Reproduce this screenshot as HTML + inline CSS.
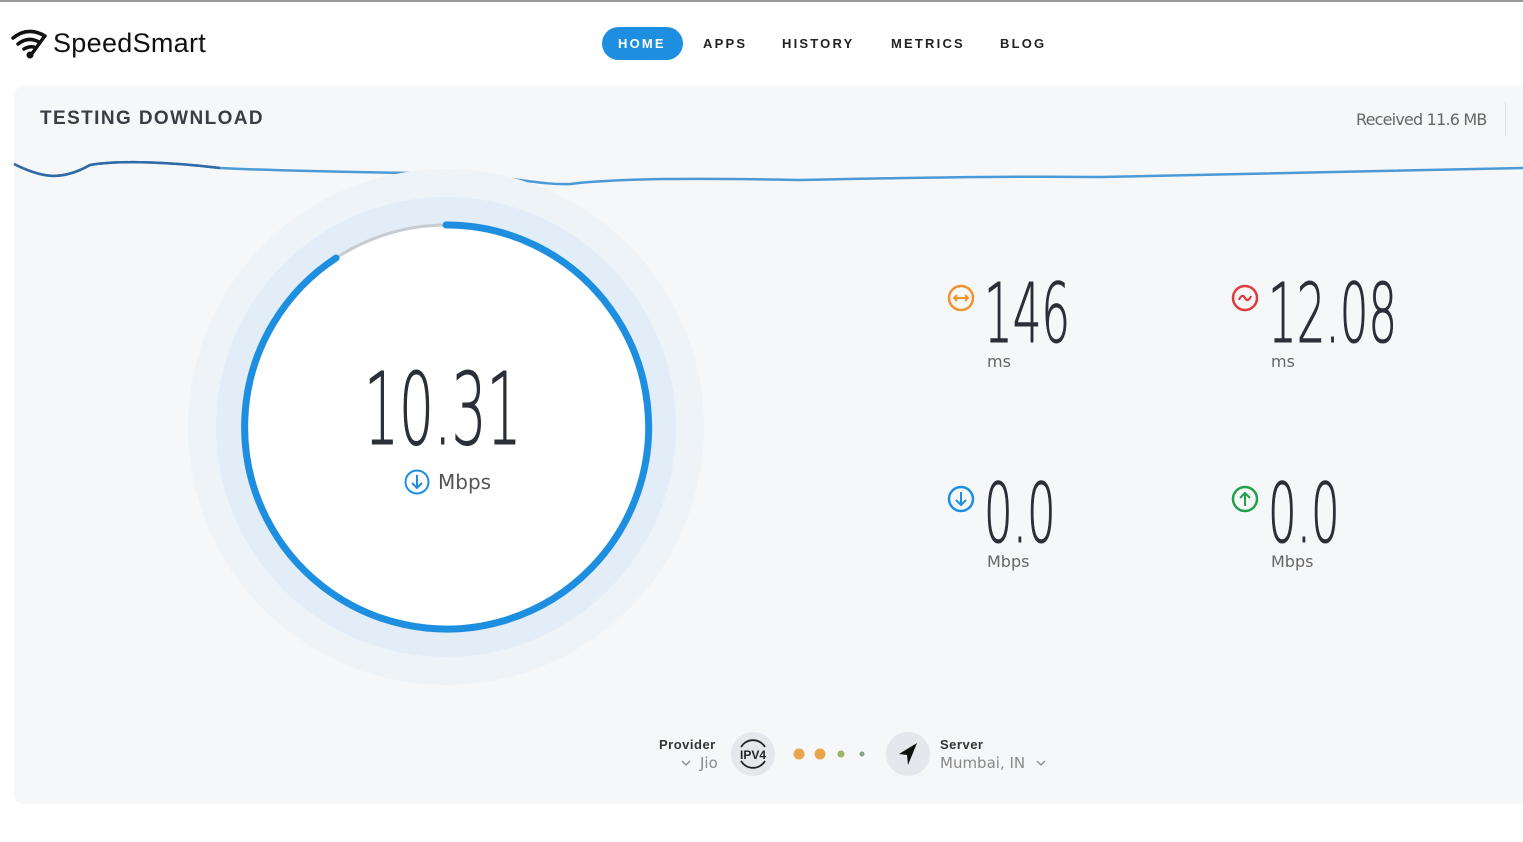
<!DOCTYPE html>
<html><head><meta charset="utf-8"><style>
*{margin:0;padding:0;box-sizing:border-box}
body{width:1523px;height:840px;background:#fff;font-family:"Liberation Sans",sans-serif;position:relative;overflow:hidden;border-top:2px solid #9a9a9a}
.abs{position:absolute}
.nav{font-weight:bold;font-size:13px;letter-spacing:2.2px;color:#222;top:34px}
.num{font-family:"DejaVu Sans","Liberation Sans",sans-serif;font-weight:200;color:#2b2f38;transform-origin:0 0;transform:scaleX(.55);line-height:1;white-space:nowrap;-webkit-text-stroke:1px #2b2f38}
.unit{font-family:"DejaVu Sans",sans-serif;font-size:16px;color:#666}
</style></head><body>
<svg class="abs" style="left:10px;top:26px" width="40" height="32" viewBox="0 0 40 32">
<path d="M3 10 Q18 -2 35 8" stroke="#111" stroke-width="3.5" fill="none" stroke-linecap="round"/>
<path d="M8 16 Q18 8 29 14" stroke="#111" stroke-width="3.5" fill="none" stroke-linecap="round"/>
<path d="M14 21 Q19 18 24 19" stroke="#111" stroke-width="3.5" fill="none" stroke-linecap="round"/>
<path d="M34 9 L21 27" stroke="#111" stroke-width="3.5" stroke-linecap="round"/>
<circle cx="20" cy="27" r="3.5" fill="#111"/></svg>
<div class="abs" style="left:53px;top:26px;font-size:27px;color:#111;letter-spacing:.3px">SpeedSmart</div>
<div class="abs" style="left:602px;top:25px;width:81px;height:33px;border-radius:17px;background:#1e8fe0"></div>
<div class="abs nav" style="left:618px;color:#fff">HOME</div>
<div class="abs nav" style="left:703px">APPS</div>
<div class="abs nav" style="left:782px">HISTORY</div>
<div class="abs nav" style="left:891px">METRICS</div>
<div class="abs nav" style="left:1000px">BLOG</div>
<div class="abs" style="left:14px;top:84px;width:1530px;height:718px;background:#f6f7f8;border-radius:10px"></div>
<div class="abs" style="left:40px;top:106px;font-size:19px;font-weight:bold;color:#3a3d44;letter-spacing:1.4px">TESTING DOWNLOAD</div>
<div class="abs" style="left:1356px;top:108px;font-size:16px;color:#666;font-family:'DejaVu Sans',sans-serif;letter-spacing:-.8px">Received 11.6 MB</div>
<div class="abs" style="left:1505px;top:100px;width:1px;height:34px;background:#e2e2e2"></div>
<svg class="abs" style="left:0;top:0" width="1523" height="840">
<path d="M14 162 C40 175 60 180 90 163 C120 158 170 160 220 166 C300 170 380 170 460 172 C520 176 540 183 570 182 C620 176 700 176 800 178 C900 176 1000 174 1100 175 C1250 172 1400 168 1523 166" stroke="#4a9ad8" stroke-width="2.5" fill="none"/>
<path d="M14 162 C40 175 60 180 90 163 C120 158 170 160 220 166" stroke="#2f6aa6" stroke-width="2.5" fill="none"/>
<circle cx="446" cy="425" r="258" fill="#eef3f8"/>
<circle cx="446" cy="425" r="230" fill="#e2edf7"/>
<circle cx="446" cy="425" r="202" fill="#fff"/>
<path d="M336 256 A202 202 0 0 1 446 223" stroke="#c8cbd0" stroke-width="3" fill="none"/>
<path d="M446 223 A202 202 0 1 1 336 256" stroke="#1e8fe0" stroke-width="7" fill="none" stroke-linecap="round"/>
<circle cx="417" cy="480" r="11.5" fill="none" stroke="#1e8fe0" stroke-width="2"/>
<path d="M417 473 V486 M412 481 L417 486 L422 481" stroke="#1e8fe0" stroke-width="2" fill="none"/>
<circle cx="961" cy="296" r="12" fill="none" stroke="#ef9530" stroke-width="2.5"/>
<path d="M954 296 H968 M957 293 L954 296 L957 299 M965 293 L968 296 L965 299" stroke="#ef9530" stroke-width="2" fill="none"/>
<circle cx="1245" cy="296" r="12" fill="none" stroke="#e23a3a" stroke-width="2.5"/>
<path d="M1239 298 Q1242 291 1245 296 Q1248 301 1251 294" stroke="#e23a3a" stroke-width="2.2" fill="none"/>
<circle cx="961" cy="497" r="12" fill="none" stroke="#1e8fe0" stroke-width="2.5"/>
<path d="M961 490 V503 M956 498 L961 503 L966 498" stroke="#1e8fe0" stroke-width="2" fill="none"/>
<circle cx="1245" cy="497" r="12" fill="none" stroke="#22a04a" stroke-width="2.5"/>
<path d="M1245 504 V491 M1240 496 L1245 491 L1250 496" stroke="#22a04a" stroke-width="2" fill="none"/>
<circle cx="753" cy="752" r="22" fill="#e4e7eb"/>
<text x="753" y="757" font-size="12" font-weight="bold" text-anchor="middle" font-family="Liberation Sans" fill="#222">IPV4</text>
<path d="M741 745 A14 14 0 0 1 765 745 M741 759 A14 14 0 0 0 765 759" stroke="#222" stroke-width="1.8" fill="none"/>
<circle cx="799" cy="752" r="5.5" fill="#e9a54c"/>
<circle cx="820" cy="752" r="5.5" fill="#e9a54c"/>
<circle cx="841" cy="752" r="3.5" fill="#9cb36a"/>
<circle cx="862" cy="752" r="2.5" fill="#8aa08a"/>
<circle cx="908" cy="752" r="22" fill="#e4e7eb"/>
<path d="M917 741 L899 752 L907 753 L908 763 Z" fill="#111"/>
<path d="M682 759 L686 763 L690 759 M1037 759 L1041 763 L1045 759" stroke="#888" stroke-width="1.3" fill="none"/>
</svg>
<div class="abs num" style="left:364px;top:358px;font-size:100px">10.31</div>
<div class="abs" style="left:438px;top:468px;font-size:20px;color:#555;font-family:'DejaVu Sans',sans-serif">Mbps</div>
<div class="abs num" style="left:984px;top:272px;font-size:82px">146</div>
<div class="abs unit" style="left:987px;top:350px">ms</div>
<div class="abs num" style="left:1268px;top:272px;font-size:82px">12.08</div>
<div class="abs unit" style="left:1271px;top:350px">ms</div>
<div class="abs num" style="left:984px;top:472px;font-size:82px">0.0</div>
<div class="abs unit" style="left:987px;top:550px">Mbps</div>
<div class="abs num" style="left:1268px;top:472px;font-size:82px">0.0</div>
<div class="abs unit" style="left:1271px;top:550px">Mbps</div>
<div class="abs" style="left:659px;top:735px;font-size:13px;font-weight:bold;color:#333;letter-spacing:.5px">Provider</div>
<div class="abs" style="left:700px;top:752px;font-size:15px;color:#888;font-family:'DejaVu Sans',sans-serif">Jio</div>
<div class="abs" style="left:940px;top:735px;font-size:13px;font-weight:bold;color:#333;letter-spacing:.5px">Server</div>
<div class="abs" style="left:940px;top:752px;font-size:15px;color:#888;font-family:'DejaVu Sans',sans-serif">Mumbai, IN</div>
</body></html>
